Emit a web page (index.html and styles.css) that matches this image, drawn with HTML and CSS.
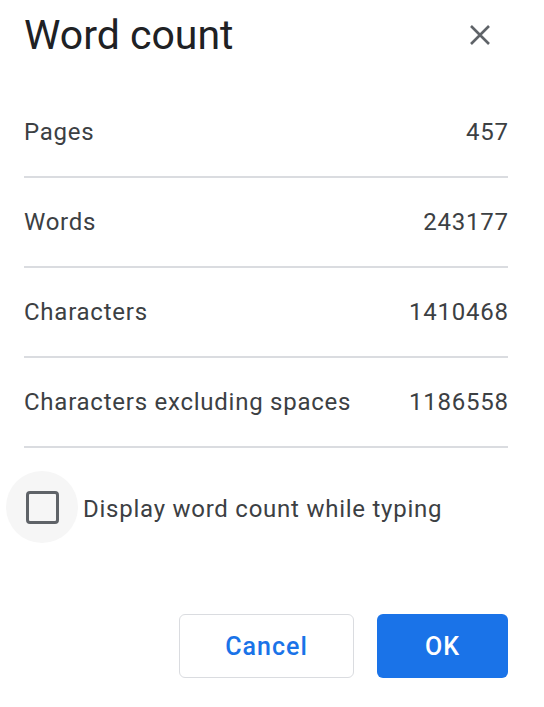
FILE: index.html
```html
<!DOCTYPE html>
<html lang="en">
<head>
<meta charset="utf-8">
<title>Word count</title>
<link rel="stylesheet" href="styles.css">
</head>
<body>
<div class="dialog">
  <div class="header">
    <h1 class="title">Word count</h1>
    <button class="close" aria-label="Close">
      <svg width="22" height="22" viewBox="0 0 22 22"><path d="M2 2L20 20M20 2L2 20" stroke="#5f6368" stroke-width="2.6" fill="none"/></svg>
    </button>
  </div>
  <div class="stats">
    <div class="row"><span class="label">Pages</span><span class="value">457</span></div>
    <div class="row"><span class="label">Words</span><span class="value">243177</span></div>
    <div class="row"><span class="label">Characters</span><span class="value">1410468</span></div>
    <div class="row"><span class="label">Characters excluding spaces</span><span class="value">1186558</span></div>
  </div>
  <label class="check">
    <span class="check-hit"><span class="box"></span></span>
    <span class="check-label">Display word count while typing</span>
  </label>
  <div class="actions">
    <button class="btn btn-cancel">Cancel</button>
    <button class="btn btn-ok">OK</button>
  </div>
</div>
</body>
</html>
```

FILE: styles.css
```css
html, body {
  margin: 0;
  padding: 0;
  background: #ffffff;
}
body {
  font-family: Roboto, "Liberation Sans", sans-serif;
  color: #3c4043;
}
.dialog {
  width: 544px;
  height: 707px;
  box-sizing: border-box;
  padding: 0 36px 0 24px;
  display: flex;
  flex-direction: column;
}
.header {
  height: 88px;
  display: flex;
  align-items: center;
  justify-content: space-between;
}
.title {
  margin: 0;
  margin-top: -18px;
  font-family: Roboto, "Liberation Sans", sans-serif;
  font-weight: 400;
  font-size: 41px;
  color: #202124;
  letter-spacing: 0;
}
.close {
  border: 0;
  background: none;
  padding: 0;
  width: 22px;
  height: 22px;
  margin-right: 17px;
  margin-top: -19px;
  display: flex;
}
.row {
  height: 88px;
  border-bottom: 2px solid #dadce0;
  display: flex;
  align-items: center;
  justify-content: space-between;
  font-size: 24px;
  letter-spacing: 0.75px;
  color: #3c4043;
}
.value {
  margin-right: -0.75px;
}
.check {
  display: flex;
  align-items: center;
  margin-left: -18px;
  margin-top: 23px;
}
.check-hit {
  width: 72px;
  height: 72px;
  border-radius: 50%;
  background: #f6f6f6;
  display: flex;
  align-items: center;
  justify-content: center;
}
.box {
  width: 27px;
  height: 27px;
  border: 3px solid #5f6368;
  border-radius: 4px;
}
.check-label {
  font-size: 24px;
  letter-spacing: 0.75px;
  color: #3c4043;
  margin-left: 5px;
  padding-top: 4px;
}
.actions {
  margin-top: 71px;
  display: flex;
  justify-content: flex-end;
  gap: 23px;
}
.btn {
  height: 64px;
  border-radius: 6px;
  font-family: Roboto, "Liberation Sans", sans-serif;
  font-weight: 500;
  font-size: 25px;
  letter-spacing: 1px;
  box-sizing: border-box;
}
.btn-cancel {
  width: 175px;
  background: #ffffff;
  border: 1.5px solid #dadce0;
  color: #1a73e8;
}
.btn-ok {
  width: 131px;
  background: #1a73e8;
  border: 0;
  color: #ffffff;
}
```
